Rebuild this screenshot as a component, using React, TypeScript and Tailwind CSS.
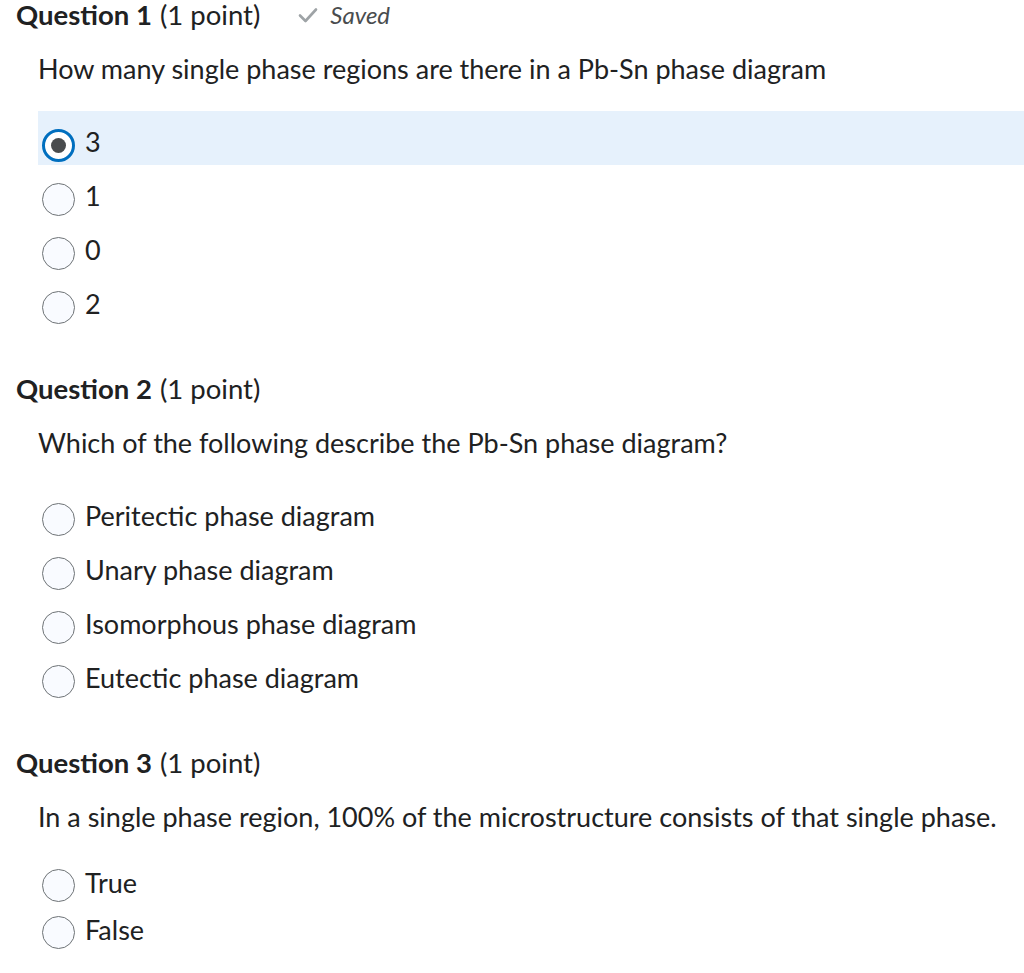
type Option = { label: string; selected?: boolean }

function Radio({ selected }: { selected?: boolean }) {
  if (selected) {
    return (
      <span className="flex h-[33px] w-[33px] shrink-0 items-center justify-center rounded-full border-[3px] border-[#006fbf] bg-white">
        <span className="h-[15px] w-[15px] rounded-full bg-[#494c4e]" />
      </span>
    )
  }
  return <span className="h-[33px] w-[33px] shrink-0 rounded-full border border-[#6e7376] bg-[#f9fbff]" />
}

function Question({
  num,
  text,
  options,
  saved,
  rowCls,
  optionsTop,
}: {
  num: number
  text: string
  options: Option[]
  saved?: boolean
  rowCls: string
  optionsTop: string
}) {
  return (
    <section>
      <div className="flex h-[30px] items-center pl-4 text-[27.5px] leading-[30px] text-[#202122]">
        <span className="font-bold">Question {num}</span>
        <span className="ml-[8px]">(1 point)</span>
        {saved && (
          <span className="ml-[38px] flex items-center gap-[12px] text-[24px] italic text-[#494c4e]">
            <svg width="20" height="16" viewBox="0 0 20 16" fill="none">
              <path d="M2 8.5 L7.5 14 L18 2.5" stroke="#9ea3a6" strokeWidth="2.6" strokeLinecap="round" strokeLinejoin="round" />
            </svg>
            Saved
          </span>
        )}
      </div>
      <p className="mt-[23px] h-[32px] pl-[38px] text-[27px] leading-[32px] text-[#202122]">{text}</p>
      <div className={optionsTop}>
        {options.map((o) => (
          <div
            key={o.label}
            className={`ml-[38px] flex items-center gap-[10px] pl-[4px] ${rowCls} ${o.selected ? 'bg-[#e6f1fc]' : ''}`}
          >
            <Radio selected={o.selected} />
            <span className="-mt-[6px] text-[27px] leading-[32px] text-[#202122]">{o.label}</span>
          </div>
        ))}
      </div>
    </section>
  )
}

export default function App() {
  return (
    <div className="min-h-[973px] w-[1024px] bg-white font-['Lato',sans-serif]">
      <Question
        num={1}
        saved
        text="How many single phase regions are there in a Pb-Sn phase diagram"
        options={[{ label: '3', selected: true }, { label: '1' }, { label: '0' }, { label: '2' }]}
        rowCls="h-[54px] pt-[14px]"
        optionsTop="mt-[26px]"
      />
      <div className="h-[47px]" />
      <Question
        num={2}
        text="Which of the following describe the Pb-Sn phase diagram?"
        options={[
          { label: 'Peritectic phase diagram' },
          { label: 'Unary phase diagram' },
          { label: 'Isomorphous phase diagram' },
          { label: 'Eutectic phase diagram' },
        ]}
        rowCls="h-[54px] pt-[14px]"
        optionsTop="mt-[26px]"
      />
      <div className="h-[47px]" />
      <Question
        num={3}
        text="In a single phase region, 100% of the microstructure consists of that single phase."
        options={[{ label: 'True' }, { label: 'False' }]}
        rowCls="h-[47px]"
        optionsTop="mt-[29px]"
      />
    </div>
  )
}
